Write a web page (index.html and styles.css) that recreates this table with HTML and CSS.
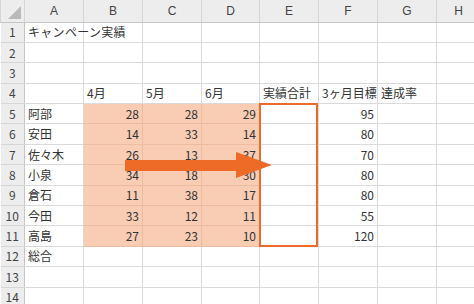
FILE: index.html
```html
<!DOCTYPE html>
<html lang="ja">
<head>
    <meta charset="UTF-8">
    <title>キャンペーン実績</title>
    <link rel="stylesheet" href="styles.css">
</head>
<body>
    <div class="sheet">
        <table class="grid">
            <colgroup>
                <col class="c-row"><col class="c-a"><col class="c-b"><col class="c-c"><col class="c-d"><col class="c-e"><col class="c-f"><col class="c-g"><col class="c-h">
            </colgroup>
            <thead>
                <tr>
                    <th class="corner"><span class="tri"></span></th>
                    <th>A</th><th>B</th><th>C</th><th>D</th><th>E</th><th>F</th><th>G</th><th>H</th>
                </tr>
            </thead>
            <tbody>
                <tr><th>1</th><td class="spill">キャンペーン実績</td><td></td><td></td><td></td><td></td><td></td><td></td><td></td></tr>
                <tr><th>2</th><td></td><td></td><td></td><td></td><td></td><td></td><td></td><td></td></tr>
                <tr><th>3</th><td></td><td></td><td></td><td></td><td></td><td></td><td></td><td></td></tr>
                <tr><th>4</th><td></td><td>4月</td><td>5月</td><td>6月</td><td>実績合計</td><td>3ヶ月目標</td><td>達成率</td><td></td></tr>
                <tr><th>5</th><td>阿部</td><td class="fill num">28</td><td class="fill num">28</td><td class="fill num">29</td><td></td><td class="num">95</td><td></td><td></td></tr>
                <tr><th>6</th><td>安田</td><td class="fill num">14</td><td class="fill num">33</td><td class="fill num">14</td><td></td><td class="num">80</td><td></td><td></td></tr>
                <tr><th>7</th><td>佐々木</td><td class="fill num">26</td><td class="fill num">13</td><td class="fill num">37</td><td></td><td class="num">70</td><td></td><td></td></tr>
                <tr><th>8</th><td>小泉</td><td class="fill num">34</td><td class="fill num">18</td><td class="fill num">30</td><td></td><td class="num">80</td><td></td><td></td></tr>
                <tr><th>9</th><td>倉石</td><td class="fill num">11</td><td class="fill num">38</td><td class="fill num">17</td><td></td><td class="num">80</td><td></td><td></td></tr>
                <tr><th>10</th><td>今田</td><td class="fill num">33</td><td class="fill num">12</td><td class="fill num">11</td><td></td><td class="num">55</td><td></td><td></td></tr>
                <tr><th>11</th><td>高島</td><td class="fill num">27</td><td class="fill num">23</td><td class="fill num">10</td><td></td><td class="num">120</td><td></td><td></td></tr>
                <tr><th>12</th><td>総合</td><td></td><td></td><td></td><td></td><td></td><td></td><td></td></tr>
                <tr><th>13</th><td></td><td></td><td></td><td></td><td></td><td></td><td></td><td></td></tr>
                <tr><th>14</th><td></td><td></td><td></td><td></td><td></td><td></td><td></td><td></td></tr>
            </tbody>
        </table>

        <!-- highlighted target range E5:E11 -->
        <div class="target-box"></div>

        <!-- arrow from the monthly values to the total column -->
        <svg class="arrow" width="150" height="30" viewBox="0 0 150 30">
            <path d="M0 9 H111 V1 L147 14 L111 27 V20 H0 Z" fill="#ee6a27"/>
        </svg>
    </div>
</body>
</html>
```

FILE: styles.css
```css
body {
    margin: 0;
    background: #ffffff;
    font-family: "Noto Sans CJK JP", "Noto Sans", sans-serif;
    color: #333;
    overflow: hidden;
}

.sheet {
    position: relative;
    width: 474px;
    height: 304px;
}

/* Spreadsheet grid */
.grid {
    border-collapse: collapse;
    table-layout: fixed;
    width: 480px;
    font-size: 12px;
}

.c-row { width: 24px; }
.c-a, .c-b, .c-c, .c-e, .c-f, .c-g { width: 59px; }
.c-d { width: 58px; }
.c-h { width: 44px; }

.grid th,
.grid td {
    border: 1px solid #dadada;
    padding: 0 3px;
    height: 20.4px;
    line-height: 14px;
    white-space: nowrap;
    overflow: hidden;
    box-sizing: border-box;
}

/* long titles run on into the empty cells beside them */
.grid td.spill {
    overflow: visible;
    letter-spacing: 0.3px;
}

.grid thead th {
    height: 22px;
    background-color: #ededed;
    color: #444;
    font-family: "Liberation Sans", "Noto Sans", sans-serif;
    font-weight: normal;
    font-size: 12px;
    text-align: center;
    border-color: #d6d6d6;
    border-bottom-color: #c6c6c6;
    border-top: none;
}

.grid tbody th {
    background-color: #ededed;
    color: #444;
    font-weight: normal;
    font-size: 12px;
    text-align: center;
    padding: 0;
    border-color: #d6d6d6;
    border-right-color: #c6c6c6;
    border-left: none;
}

.corner {
    position: relative;
}

.tri {
    position: absolute;
    right: 3px;
    bottom: 3px;
    width: 0;
    height: 0;
    border-left: 13px solid transparent;
    border-bottom: 13px solid #b9b9b9;
}

.grid td {
    text-align: left;
}

.grid td.num {
    text-align: right;
}

/* peach fill for the monthly figures */
.grid td.fill {
    background-color: #f8cdb3;
    border-color: #ebbca2;
}

/* orange frame over E5:E11 */
.target-box {
    position: absolute;
    left: 259px;
    top: 103px;
    width: 55px;
    height: 140px;
    border: 2px solid #ec6b2b;
}

.arrow {
    position: absolute;
    left: 125px;
    top: 151px;
}
```
